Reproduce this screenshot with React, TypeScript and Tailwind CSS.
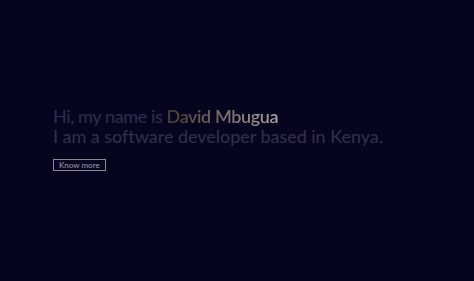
export default function App() {
  return (
    <main className="flex h-screen w-full flex-col justify-center bg-[#06041f] px-[53px] pb-[2px] font-['Lato','Noto_Sans',sans-serif]">
      <h1 className="text-[18px] font-medium leading-[20px] tracking-[-0.4px] text-[#2e2c4c]">
        Hi, my name is{' '}
        <span className="bg-gradient-to-r from-[#463c32] to-[#aca3a2] bg-clip-text font-semibold text-transparent">
          David Mbugua
        </span>
      </h1>
      <p className="text-[18px] font-medium leading-[20px] tracking-[-0.05px] text-[#302e4b]">
        I am a software developer based in Kenya.
      </p>
      <div className="mt-[4px]">
        <button
          type="button"
          className="border border-[#8d8796] px-[5px] py-0 text-[8px] font-medium leading-[10px] text-[#9a96a3]"
        >
          Know more
        </button>
      </div>
    </main>
  );
}
